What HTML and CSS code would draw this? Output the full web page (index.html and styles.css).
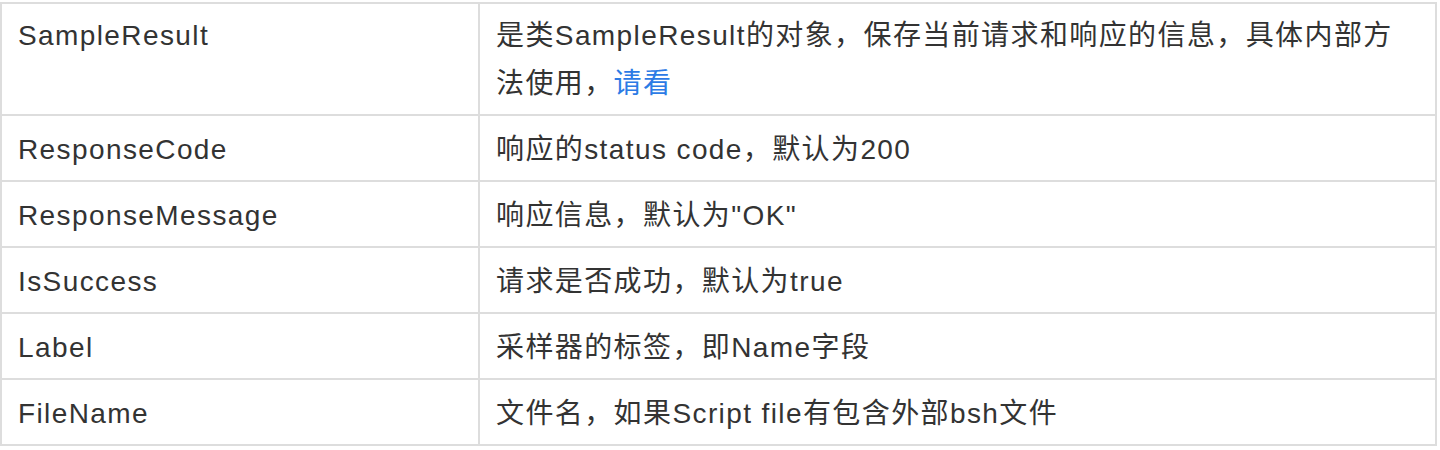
FILE: index.html
```html
<!DOCTYPE html>
<html lang="zh-CN">
<head>
<meta charset="utf-8">
<title>SampleResult</title>
<link rel="stylesheet" href="styles.css">
</head>
<body>
<div class="table">
  <div class="cell cell-first">SampleResult</div>
  <div class="cell cell-first">是类SampleResult的对象，保存当前请求和响应的信息，具体内部方<br>法使用，<a class="link" href="#">请看</a></div>
  <div class="cell">ResponseCode</div>
  <div class="cell">响应的status code，默认为200</div>
  <div class="cell">ResponseMessage</div>
  <div class="cell">响应信息，默认为"OK"</div>
  <div class="cell">IsSuccess</div>
  <div class="cell">请求是否成功，默认为true</div>
  <div class="cell">Label</div>
  <div class="cell">采样器的标签，即Name字段</div>
  <div class="cell">FileName</div>
  <div class="cell">文件名，如果Script file有包含外部bsh文件</div>
</div>
</body>
</html>
```

FILE: styles.css
```css
html, body {
  margin: 0;
  padding: 0;
  background: #ffffff;
}
body {
  padding-top: 2px;
  font-family: "Liberation Sans", "Noto Sans CJK SC", sans-serif;
  font-size: 28px;
  letter-spacing: 1.4px;
  color: #333333;
}
.table {
  display: grid;
  grid-template-columns: 478px 1fr;
  width: 1437px;
  box-sizing: border-box;
  border-top: 2px solid #dddddd;
  border-left: 2px solid #dddddd;
}
.cell {
  padding: 10px 16px 6px;
  line-height: 48px;
  border-right: 2px solid #dddddd;
  border-bottom: 2px solid #dddddd;
}
.cell-first {
  padding-top: 8px;
}
.link {
  color: #2c7be5;
  text-decoration: none;
}
```
